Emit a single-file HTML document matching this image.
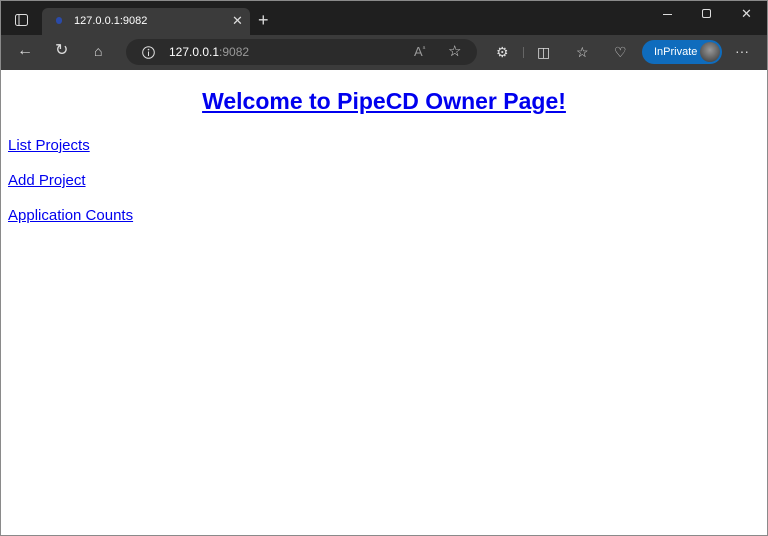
<!DOCTYPE html>
<html><head><meta charset="utf-8"><style>
*{margin:0;padding:0;box-sizing:border-box}
body{width:768px;height:536px;overflow:hidden;background:#fff;font-family:"Liberation Sans",sans-serif;position:relative}
.frame{position:absolute;inset:0;border:1px solid #8a8a8a;pointer-events:none;z-index:9}
.title{position:absolute;left:0;top:0;width:768px;height:35px;background:#1f1f1f}
.tab{position:absolute;left:42px;top:8px;width:208px;height:27px;background:#3b3b3b;border-radius:6px 6px 0 0;color:#fff;font-size:11px}
.tool{position:absolute;left:0;top:35px;width:768px;height:35px;background:#3b3b3b}
.addr{position:absolute;left:126px;top:4px;width:351px;height:26px;background:#2b2b2b;border-radius:13px}
.ic{position:absolute;color:#ddd;font-size:14px;line-height:1}
.inp{position:absolute;left:642px;top:5px;width:80px;height:24px;background:#0f6cbd;border-radius:12px;color:#fff;font-size:11px;line-height:24px;padding-left:12px}
.av{position:absolute;right:2px;top:2px;width:20px;height:20px;border-radius:50%;background:radial-gradient(circle at 50% 40%,#999,#333)}
h1{position:absolute;left:0;width:768px;top:88px;text-align:center;font-size:23px;font-weight:bold}
a{color:#0000ee;text-decoration:underline}
.l{position:absolute;left:8px;font-size:15px}
</style></head><body>
<div class="frame"></div>
<div class="title">
<svg style="position:absolute;left:15px;top:14px" width="13" height="12"><rect x="0.5" y="0.5" width="12" height="11" rx="2" fill="none" stroke="#ddd"/><line x1="4" y1="1" x2="4" y2="11" stroke="#ddd"/></svg>
<div class="tab"><span style="position:absolute;left:14px;top:9px;width:6px;height:7px;background:#2a4aa8;border-radius:3px"></span><span style="position:absolute;left:32px;top:7px">127.0.0.1:9082</span><span style="position:absolute;left:190px;top:5px;font-size:13px;color:#ddd">✕</span></div>
<span class="ic" style="left:258px;top:11px;font-size:18px">+</span>
<div style="position:absolute;left:663px;top:14px;width:9px;height:1px;background:#ddd"></div>
<div style="position:absolute;left:702px;top:9px;width:9px;height:9px;border:1px solid #ddd;border-radius:2px"></div>
<span class="ic" style="left:741px;top:7px;font-size:13px">✕</span>
</div>
<div class="tool">
<span class="ic" style="left:17px;top:8px;font-size:16px">←</span>
<span class="ic" style="left:55px;top:8px;font-size:16px">↻</span>
<span class="ic" style="left:94px;top:9px;font-size:14px">⌂</span>
<div class="addr"><svg style="position:absolute;left:16px;top:7px" width="13" height="13"><circle cx="6.5" cy="6.5" r="5.8" fill="none" stroke="#ddd"/><line x1="6.5" y1="5.5" x2="6.5" y2="10" stroke="#ddd"/><circle cx="6.5" cy="3.6" r=".8" fill="#ddd"/></svg><span style="position:absolute;left:43px;top:6px;font-size:12px;color:#fff">127.0.0.1<span style="color:#999">:9082</span></span>
<span class="ic" style="left:288px;top:6px;font-size:13px;color:#999">A<sup style="font-size:7px">ᵃ</sup></span><span class="ic" style="left:322px;top:5px;font-size:15px">☆</span></div>
<span class="ic" style="left:496px;top:10px">⚙</span>
<div style="position:absolute;left:523px;top:12px;width:1px;height:11px;background:#666"></div>
<span class="ic" style="left:537px;top:10px">◫</span>
<span class="ic" style="left:576px;top:10px">☆</span>
<span class="ic" style="left:614px;top:10px">♡</span>
<div class="inp">InPrivate<div class="av"></div></div>
<span class="ic" style="left:735px;top:9px">···</span>
</div>
<h1><a href="#">Welcome to PipeCD Owner Page!</a></h1>
<a class="l" href="#" style="top:137px">List Projects</a>
<a class="l" href="#" style="top:172px">Add Project</a>
<a class="l" href="#" style="top:207px">Application Counts</a>
</body></html>
